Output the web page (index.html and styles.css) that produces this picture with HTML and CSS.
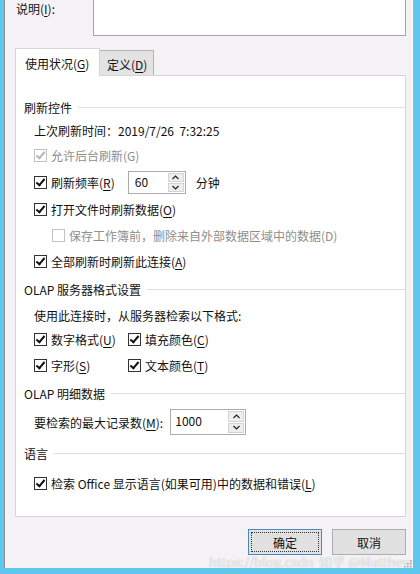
FILE: index.html
```html
<!DOCTYPE html>
<html lang="zh-CN">
<head>
    <meta charset="UTF-8">
    <title>连接属性</title>
    <link rel="stylesheet" href="styles.css">
</head>
<body>
    <div class="dialog">
        <div class="top-row">
            <span class="top-label">说明(<u>I</u>):</span>
            <div class="desc-box"></div>
        </div>

        <div class="tabs">
            <div class="tab active">使用状况(<u>G</u>)</div>
            <div class="tab">定义(<u>D</u>)</div>
        </div>

        <div class="panel">
            <div class="legend first">刷新控件</div>
            <div class="info pre">上次刷新时间：2019/7/26  7:32:25</div>

            <div class="row disabled">
                <span class="box checked"></span>允许后台刷新(G)
            </div>
            <div class="row spin-row">
                <span class="box checked"></span>刷新频率(<u>R</u>)
                <div class="spin spin-sm">
                    <span class="spin-value">60</span>
                    <span class="spin-btns">
                        <span class="spin-btn"><svg width="7" height="5" viewBox="0 0 7 5"><path d="M0.5 4 L3.5 1 L6.5 4" fill="none" stroke="#222" stroke-width="1.2"/></svg></span>
                        <span class="spin-btn"><svg width="7" height="5" viewBox="0 0 7 5"><path d="M0.5 1 L3.5 4 L6.5 1" fill="none" stroke="#222" stroke-width="1.2"/></svg></span>
                    </span>
                </div>
                <span class="unit">分钟</span>
            </div>
            <div class="row">
                <span class="box checked"></span>打开文件时刷新数据(<u>O</u>)
            </div>
            <div class="row indent disabled">
                <span class="box"></span>保存工作簿前，删除来自外部数据区域中的数据(D)
            </div>
            <div class="row">
                <span class="box checked"></span>全部刷新时刷新此连接(<u>A</u>)
            </div>

            <div class="legend">OLAP 服务器格式设置</div>
            <div class="info short">使用此连接时，从服务器检索以下格式:</div>
            <div class="check-grid">
                <div class="row"><span class="box checked"></span>数字格式(<u>U</u>)</div>
                <div class="row"><span class="box checked"></span>填充颜色(<u>C</u>)</div>
                <div class="row"><span class="box checked"></span>字形(<u>S</u>)</div>
                <div class="row"><span class="box checked"></span>文本颜色(<u>T</u>)</div>
            </div>

            <div class="legend">OLAP 明细数据</div>
            <div class="info spin-row">
                要检索的最大记录数(<u>M</u>):
                <div class="spin spin-lg">
                    <span class="spin-value">1000</span>
                    <span class="spin-btns">
                        <span class="spin-btn"><svg width="7" height="5" viewBox="0 0 7 5"><path d="M0.5 4 L3.5 1 L6.5 4" fill="none" stroke="#222" stroke-width="1.2"/></svg></span>
                        <span class="spin-btn"><svg width="7" height="5" viewBox="0 0 7 5"><path d="M0.5 1 L3.5 4 L6.5 1" fill="none" stroke="#222" stroke-width="1.2"/></svg></span>
                    </span>
                </div>
            </div>

            <div class="legend wide">语言</div>
            <div class="row">
                <span class="box checked"></span>检索 Office 显示语言(如果可用)中的数据和错误(<u>L</u>)
            </div>
        </div>

        <div class="buttons">
            <button class="btn default"><span class="focus">确定</span></button>
            <button class="btn">取消</button>
        </div>

        <div class="watermark">https://blog.csdn  知乎 @Matthew</div>
        <svg class="grip" width="9" height="9" viewBox="0 0 9 9">
            <rect x="7" y="1" width="1.5" height="1.5" fill="#a8a8a8"/>
            <rect x="4" y="4" width="1.5" height="1.5" fill="#a8a8a8"/>
            <rect x="7" y="4" width="1.5" height="1.5" fill="#a8a8a8"/>
            <rect x="1" y="7" width="1.5" height="1.5" fill="#a8a8a8"/>
            <rect x="4" y="7" width="1.5" height="1.5" fill="#a8a8a8"/>
            <rect x="7" y="7" width="1.5" height="1.5" fill="#a8a8a8"/>
        </svg>
    </div>
</body>
</html>
```

FILE: styles.css
```css
body {
    margin: 0;
    background: #5fc6ee;
    font-family: "Noto Sans CJK SC", "Noto Sans", sans-serif;
    font-size: 12px;
    color: #111;
}
.dialog {
    position: relative;
    box-sizing: border-box;
    height: 568px;
    margin: 0 7px 0 4px;
    padding: 0 6px 0 10px;
    background: #f4f2f5;
    border-left: 1px solid #8c8c8c;
    border-right: 1px solid #fdfdfd;
}
u {
    text-decoration-thickness: 1px;
    text-underline-offset: 2px;
}

/* top description field */
.top-row {
    display: flex;
    height: 36px;
}
.top-label {
    padding: 1px 0 0 1px;
    line-height: 16px;
}
.desc-box {
    box-sizing: border-box;
    width: 313px;
    height: 36px;
    margin-left: auto;
    background: #fff;
    border: 1px solid #a5a5a5;
    border-top: none;
}

/* tabs */
.tabs {
    display: flex;
    align-items: flex-end;
    margin-top: 12px;
}
.tab {
    box-sizing: border-box;
    height: 25px;
    padding: 5px 0 0 7px;
    width: 54px;
    background: #e3e3e3;
    border: 1px solid #b4b4b4;
    border-bottom: none;
    border-left: none;
}
.tab.active {
    position: relative;
    z-index: 1;
    width: 85px;
    height: 28px;
    margin-bottom: -1px;
    padding: 6px 0 0 9px;
    background: #fff;
    border: 1px solid #d6d6d6;
    border-bottom: none;
}

/* panel */
.panel {
    box-sizing: border-box;
    height: 442px;
    padding: 19px 0 0 8px;
    background: #fff;
    border: 1px solid #d6d6d6;
}
.legend {
    display: flex;
    align-items: center;
    gap: 6px;
    height: 30px;
}
.legend::after {
    content: "";
    flex: 1;
    height: 1px;
    background: #e0e0e0;
}
.legend.first {
    height: 24px;
}
.legend.wide {
    height: 34px;
}
.info {
    display: flex;
    align-items: center;
    height: 23px;
    padding-left: 10px;
}
.info.short {
    height: 22px;
}
.pre {
    white-space: pre;
}
.row {
    display: flex;
    align-items: center;
    height: 26px;
    padding-left: 10px;
}
.row.indent {
    padding-left: 28px;
}
.spin-row {
    height: 28px;
}
.disabled {
    color: #8e8e8e;
}
.check-grid {
    display: grid;
    grid-template-columns: 94px auto;
}

/* checkboxes */
.box {
    position: relative;
    box-sizing: border-box;
    width: 13px;
    height: 13px;
    margin-right: 4px;
    background: #fff;
    border: 1px solid #333;
}
.box.checked::after {
    content: "";
    position: absolute;
    left: 3px;
    top: 0;
    width: 3px;
    height: 7px;
    border: solid #111;
    border-width: 0 2px 2px 0;
    transform: rotate(40deg);
}
.disabled .box {
    border-color: #c2c2c2;
}
.disabled .box.checked::after {
    border-color: #b6b6b6;
}

/* spin boxes */
.spin {
    display: flex;
    box-sizing: border-box;
    background: #fff;
    border: 1px solid #acacac;
}
.spin-sm {
    width: 58px;
    height: 23px;
    margin-left: 13px;
}
.spin-lg {
    width: 76px;
    height: 26px;
    margin-left: 7px;
}
.spin-value {
    flex: 1;
    padding-left: 6px;
    line-height: 20px;
}
.spin-lg .spin-value {
    padding-left: 4px;
    line-height: 22px;
}
.spin-btns {
    display: flex;
    flex-direction: column;
    width: 16px;
    margin: 1px 1px 1px 0;
    gap: 1px;
}
.spin-btn {
    flex: 1;
    display: flex;
    align-items: center;
    justify-content: center;
    background: #eeeeee;
    border: 1px solid #d4d4d4;
}
.unit {
    margin-left: 10px;
}

/* buttons */
.buttons {
    display: flex;
    justify-content: flex-end;
    gap: 10px;
    margin-top: 12px;
}
.btn {
    box-sizing: border-box;
    width: 74px;
    height: 26px;
    padding: 0;
    font-family: inherit;
    font-size: 12px;
    color: #111;
    background: #e1e1e1;
    border: 1px solid #adadad;
}
.btn.default {
    padding: 2px;
    border-color: #4c87c0;
}
.focus {
    display: flex;
    align-items: center;
    justify-content: center;
    height: 100%;
    border: 1px dotted #333;
    box-sizing: border-box;
}

.watermark {
    position: absolute;
    left: 204px;
    top: 552px;
    font-family: "Noto Sans CJK SC", "Noto Sans", sans-serif;
    font-size: 13px;
    white-space: pre;
    color: rgba(255, 255, 255, 0.8);
    text-shadow: 0 0 1px rgba(110, 110, 110, 0.6);
}
.grip {
    position: absolute;
    right: 0;
    bottom: 0;
}
```
